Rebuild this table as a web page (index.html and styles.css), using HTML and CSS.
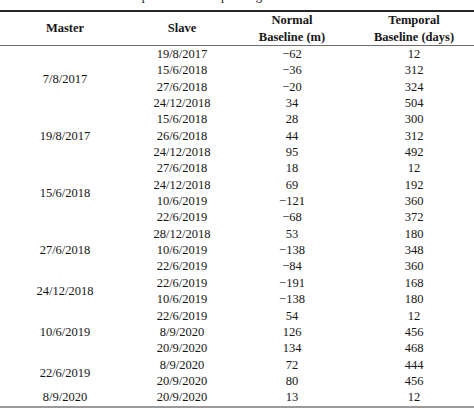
FILE: index.html
```html
<!DOCTYPE html>
<html lang="en">
<head>
<meta charset="utf-8">
<title>Interferometric pairs</title>
<link rel="stylesheet" href="styles.css">
</head>
<body>
<div class="page">
  <p class="caption"><b>Table 1.</b> Interferometric pairs and corresponding baselines.</p>
  <table class="pairs">
    <colgroup>
      <col class="c1"><col class="c2"><col class="c3"><col class="c4">
    </colgroup>
    <thead>
      <tr>
        <th>Master</th>
        <th>Slave</th>
        <th>Normal<br>Baseline (m)</th>
        <th>Temporal<br>Baseline (days)</th>
      </tr>
    </thead>
    <tbody>
      <tr><td rowspan="4">7/8/2017</td><td>19/8/2017</td><td>−62</td><td>12</td></tr>
      <tr><td>15/6/2018</td><td>−36</td><td>312</td></tr>
      <tr><td>27/6/2018</td><td>−20</td><td>324</td></tr>
      <tr><td>24/12/2018</td><td>34</td><td>504</td></tr>
      <tr><td rowspan="3">19/8/2017</td><td>15/6/2018</td><td>28</td><td>300</td></tr>
      <tr><td>26/6/2018</td><td>44</td><td>312</td></tr>
      <tr><td>24/12/2018</td><td>95</td><td>492</td></tr>
      <tr><td rowspan="4">15/6/2018</td><td>27/6/2018</td><td>18</td><td>12</td></tr>
      <tr><td>24/12/2018</td><td>69</td><td>192</td></tr>
      <tr><td>10/6/2019</td><td>−121</td><td>360</td></tr>
      <tr><td>22/6/2019</td><td>−68</td><td>372</td></tr>
      <tr><td rowspan="3">27/6/2018</td><td>28/12/2018</td><td>53</td><td>180</td></tr>
      <tr><td>10/6/2019</td><td>−138</td><td>348</td></tr>
      <tr><td>22/6/2019</td><td>−84</td><td>360</td></tr>
      <tr><td rowspan="2">24/12/2018</td><td>22/6/2019</td><td>−191</td><td>168</td></tr>
      <tr><td>10/6/2019</td><td>−138</td><td>180</td></tr>
      <tr><td rowspan="3">10/6/2019</td><td>22/6/2019</td><td>54</td><td>12</td></tr>
      <tr><td>8/9/2020</td><td>126</td><td>456</td></tr>
      <tr><td>20/9/2020</td><td>134</td><td>468</td></tr>
      <tr><td rowspan="2">22/6/2019</td><td>8/9/2020</td><td>72</td><td>444</td></tr>
      <tr><td>20/9/2020</td><td>80</td><td>456</td></tr>
      <tr><td>8/9/2020</td><td>20/9/2020</td><td>13</td><td>12</td></tr>
    </tbody>
  </table>
</div>
</body>
</html>
```
FILE: styles.css
```css
html, body {
  margin: 0;
  padding: 0;
  background: #ffffff;
  overflow: hidden;
}

.page {
  width: 478px;
  font-family: "Liberation Serif", "Times New Roman", serif;
  color: #161616;
}

.caption {
  margin: -11px 0 0 0;
  padding-left: 18px;
  font-size: 12.5px;
  line-height: 14px;
  height: 14px;
  white-space: nowrap;
}

.pairs {
  margin-top: 7px;
  width: 478px;
  table-layout: fixed;
  border-collapse: collapse;
  font-size: 12.5px;
}

.c1 { width: 130px; }
.c2 { width: 104px; }
.c3 { width: 116px; }
.c4 { width: 128px; }

.pairs thead tr {
  border-top: 2px solid #262626;
  border-bottom: 1px solid #6e6e6e;
}

.pairs th {
  font-weight: bold;
  text-align: center;
  vertical-align: middle;
  padding: 0;
  height: 33px;
  line-height: 16.5px;
}

.pairs td {
  text-align: center;
  vertical-align: middle;
  padding: 0;
  height: 16.35px;
  line-height: 16.35px;
  white-space: nowrap;
}

.pairs tbody tr:last-child {
  border-bottom: 3px solid #9a9a9a;
}
```
